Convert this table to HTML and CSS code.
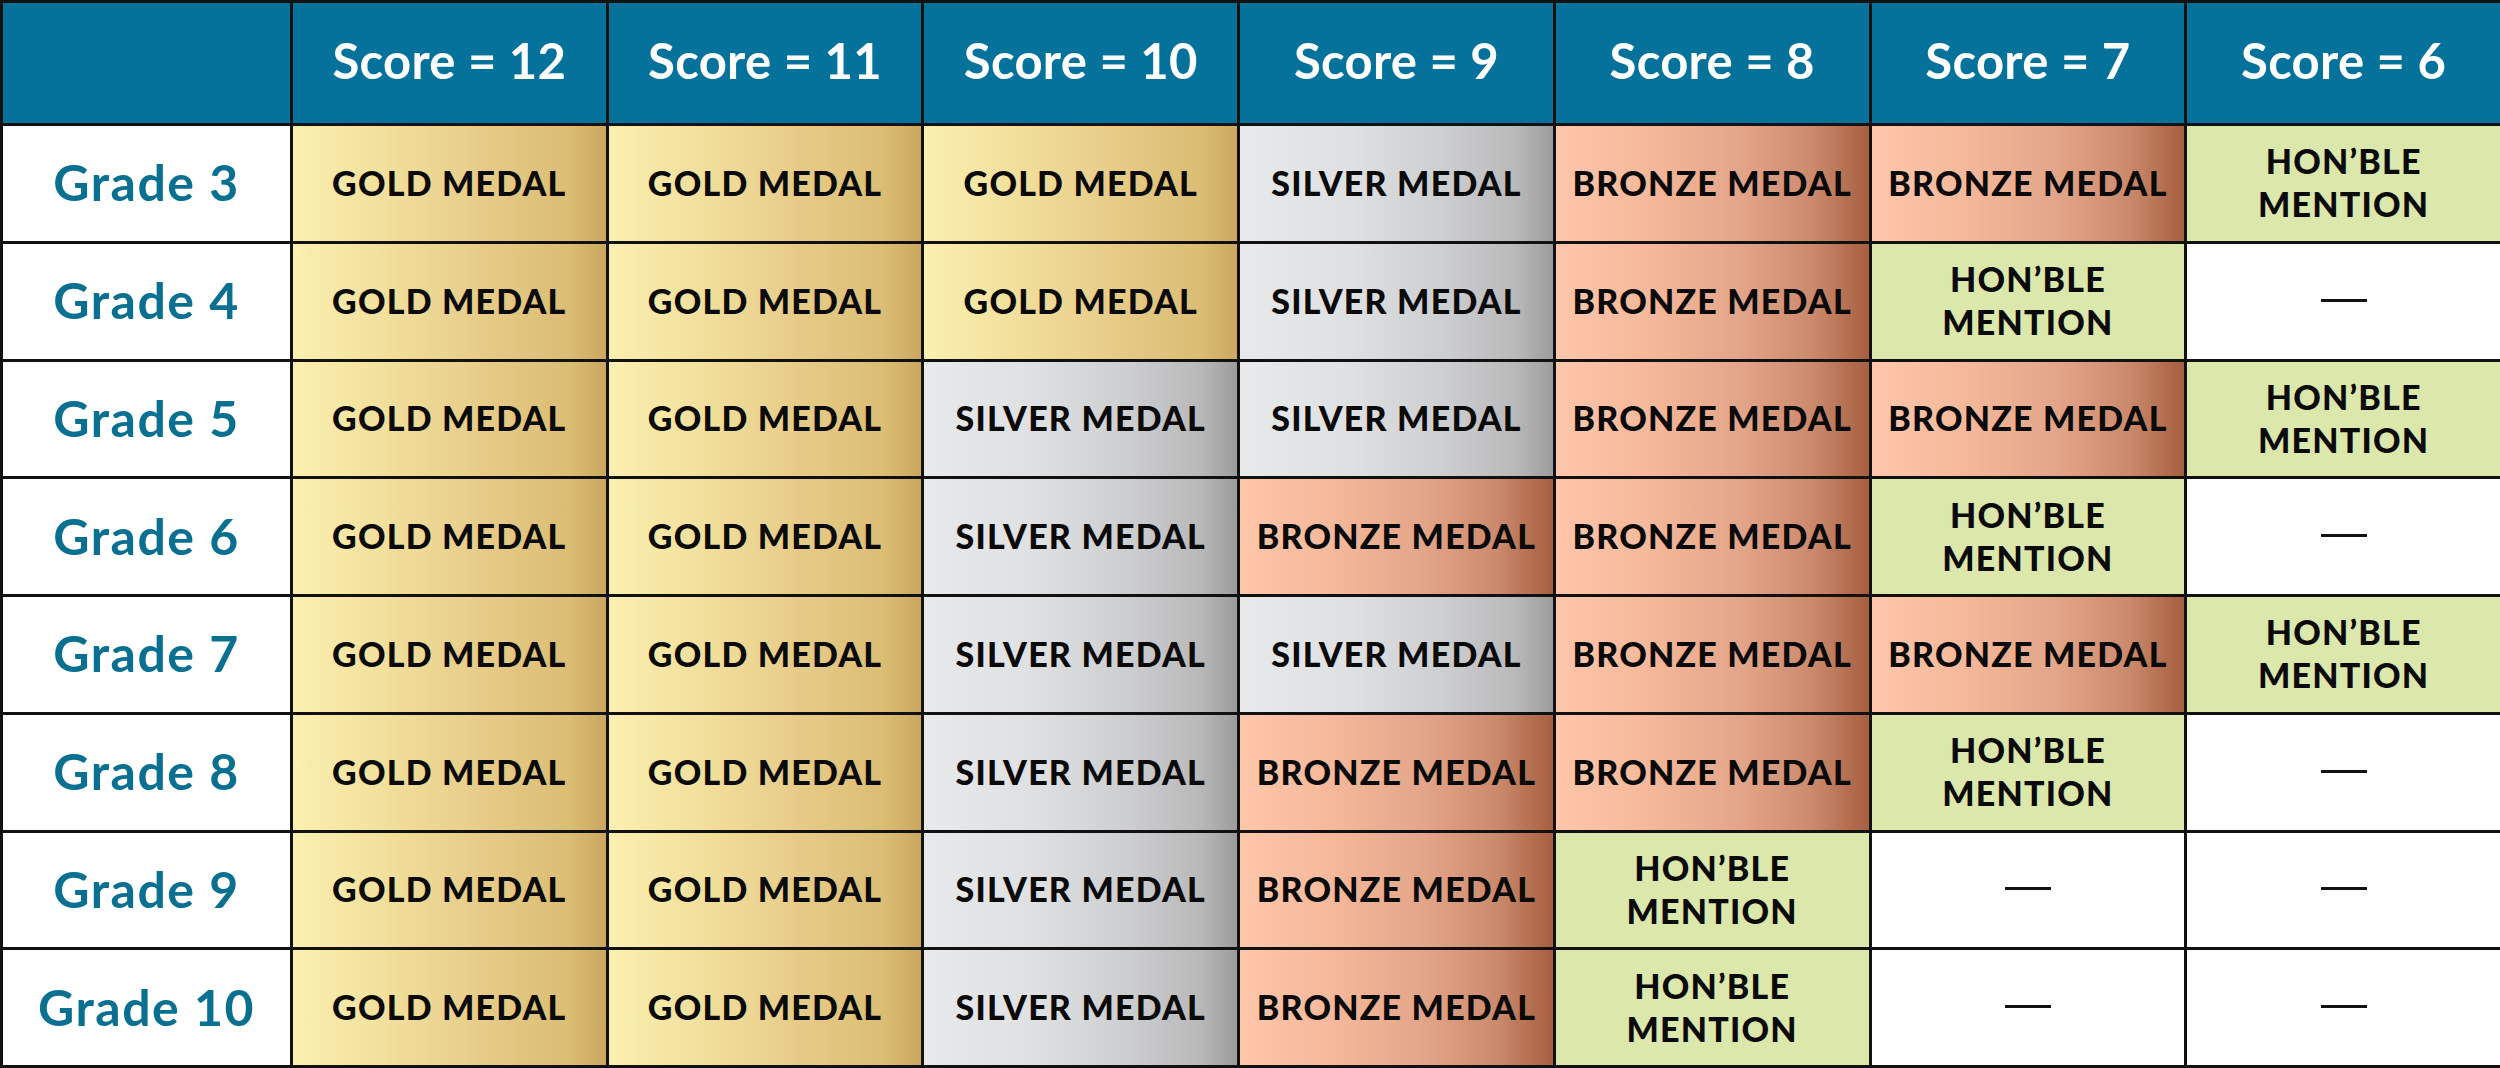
FILE: index.html
```html
<!DOCTYPE html>
<html>
<head>
<meta charset="utf-8">
<link rel="stylesheet" href="styles.css">
</head>
<body>
<div class="table">
  <div class="hd corner"></div>
  <div class="hd">Score = 12</div>
  <div class="hd">Score = 11</div>
  <div class="hd">Score = 10</div>
  <div class="hd">Score = 9</div>
  <div class="hd">Score = 8</div>
  <div class="hd">Score = 7</div>
  <div class="hd">Score = 6</div>

  <div class="grade">Grade 3</div>
  <div class="c gold">GOLD MEDAL</div>
  <div class="c gold">GOLD MEDAL</div>
  <div class="c gold">GOLD MEDAL</div>
  <div class="c silver">SILVER MEDAL</div>
  <div class="c bronze">BRONZE MEDAL</div>
  <div class="c bronze">BRONZE MEDAL</div>
  <div class="c hon">HON’BLE<br>MENTION</div>

  <div class="grade">Grade 4</div>
  <div class="c gold">GOLD MEDAL</div>
  <div class="c gold">GOLD MEDAL</div>
  <div class="c gold">GOLD MEDAL</div>
  <div class="c silver">SILVER MEDAL</div>
  <div class="c bronze">BRONZE MEDAL</div>
  <div class="c hon">HON’BLE<br>MENTION</div>
  <div class="c none"><span class="dash">—</span></div>

  <div class="grade">Grade 5</div>
  <div class="c gold">GOLD MEDAL</div>
  <div class="c gold">GOLD MEDAL</div>
  <div class="c silver">SILVER MEDAL</div>
  <div class="c silver">SILVER MEDAL</div>
  <div class="c bronze">BRONZE MEDAL</div>
  <div class="c bronze">BRONZE MEDAL</div>
  <div class="c hon">HON’BLE<br>MENTION</div>

  <div class="grade">Grade 6</div>
  <div class="c gold">GOLD MEDAL</div>
  <div class="c gold">GOLD MEDAL</div>
  <div class="c silver">SILVER MEDAL</div>
  <div class="c bronze">BRONZE MEDAL</div>
  <div class="c bronze">BRONZE MEDAL</div>
  <div class="c hon">HON’BLE<br>MENTION</div>
  <div class="c none"><span class="dash">—</span></div>

  <div class="grade">Grade 7</div>
  <div class="c gold">GOLD MEDAL</div>
  <div class="c gold">GOLD MEDAL</div>
  <div class="c silver">SILVER MEDAL</div>
  <div class="c silver">SILVER MEDAL</div>
  <div class="c bronze">BRONZE MEDAL</div>
  <div class="c bronze">BRONZE MEDAL</div>
  <div class="c hon">HON’BLE<br>MENTION</div>

  <div class="grade">Grade 8</div>
  <div class="c gold">GOLD MEDAL</div>
  <div class="c gold">GOLD MEDAL</div>
  <div class="c silver">SILVER MEDAL</div>
  <div class="c bronze">BRONZE MEDAL</div>
  <div class="c bronze">BRONZE MEDAL</div>
  <div class="c hon">HON’BLE<br>MENTION</div>
  <div class="c none"><span class="dash">—</span></div>

  <div class="grade">Grade 9</div>
  <div class="c gold">GOLD MEDAL</div>
  <div class="c gold">GOLD MEDAL</div>
  <div class="c silver">SILVER MEDAL</div>
  <div class="c bronze">BRONZE MEDAL</div>
  <div class="c hon">HON’BLE<br>MENTION</div>
  <div class="c none"><span class="dash">—</span></div>
  <div class="c none"><span class="dash">—</span></div>

  <div class="grade">Grade 10</div>
  <div class="c gold">GOLD MEDAL</div>
  <div class="c gold">GOLD MEDAL</div>
  <div class="c silver">SILVER MEDAL</div>
  <div class="c bronze">BRONZE MEDAL</div>
  <div class="c hon">HON’BLE<br>MENTION</div>
  <div class="c none"><span class="dash">—</span></div>
  <div class="c none"><span class="dash">—</span></div>
</div>
</body>
</html>
```
FILE: styles.css
```css
html, body {
  margin: 0;
  padding: 0;
  background: #ffffff;
}
body {
  font-family: Lato, "Open Sans", sans-serif;
}
.table {
  width: 2500px;
  height: 1068px;
  box-sizing: border-box;
  background: #111111;
  padding: 3px 0 3px 3px;
  display: grid;
  grid-template-columns: 287px repeat(7, 1fr);
  grid-template-rows: 120px repeat(8, 1fr);
  gap: 3px;
}
.hd {
  background: #04729a;
  color: #ffffff;
  font-weight: 700;
  font-size: 49px;
  letter-spacing: 0.3px;
  display: flex;
  align-items: center;
  justify-content: center;
  padding-bottom: 6px;
}
.grade {
  background: #ffffff;
  color: #0a7092;
  font-weight: 700;
  font-size: 50px;
  letter-spacing: 1.5px;
  display: flex;
  align-items: center;
  justify-content: center;
  padding-bottom: 2px;
}
.c {
  display: flex;
  align-items: center;
  justify-content: center;
  text-align: center;
  font-weight: 900;
  font-size: 34px;
  letter-spacing: 1.2px;
  line-height: 43px;
  color: #0a0a0a;
  padding-bottom: 2px;
}
.gold {
  background: linear-gradient(90deg, #faf0b0 0%, #f2df9c 30%, #e6cb87 62%, #dbbd74 88%, #cba75f 100%);
}
.silver {
  background: linear-gradient(90deg, #e8e9eb 0%, #dfe0e2 35%, #cdced0 65%, #b9b9ba 88%, #9c9c9c 100%);
}
.bronze {
  background: linear-gradient(90deg, #fec6ab 0%, #f6b99b 28%, #e4a68a 58%, #cc8a6d 82%, #a65f3f 100%);
}
.hon {
  background: #dce7ac;
}
.none {
  background: #ffffff;
}
.dash {
  display: inline-block;
  width: 46px;
  height: 3px;
  background: #111111;
  color: transparent;
  overflow: hidden;
  font-size: 3px;
  line-height: 3px;
}
```
